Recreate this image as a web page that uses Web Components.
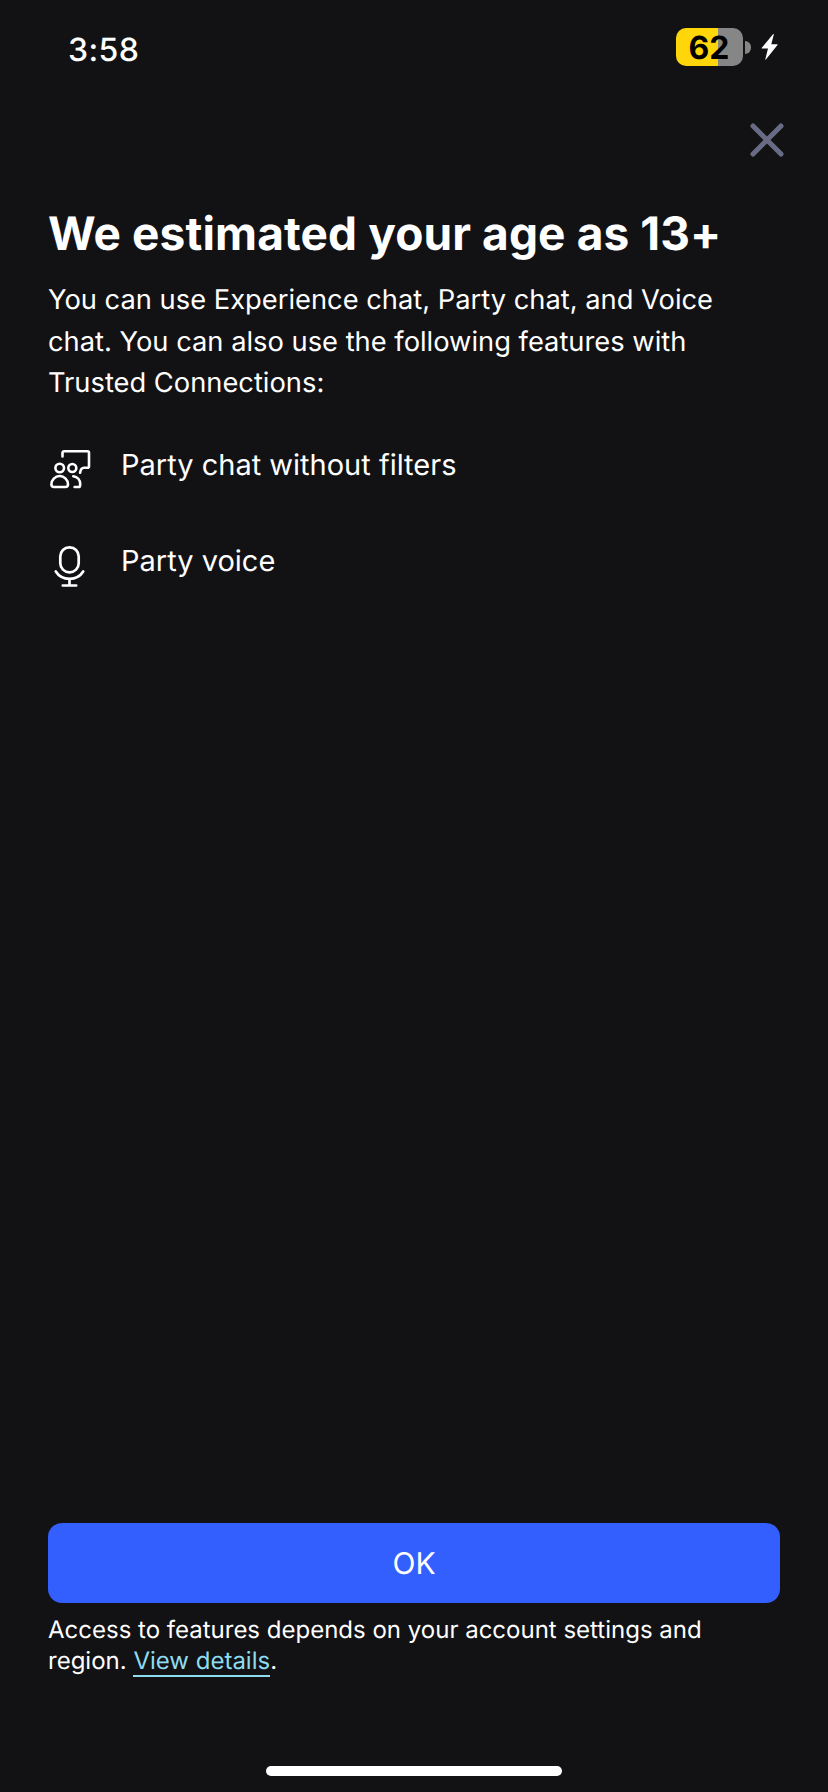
<!DOCTYPE html>
<html>
<head>
<meta charset="utf-8">
<title>Age estimate</title>
<style>
  html, body { margin: 0; padding: 0; background: #121215; }
  body { font-family: Inter, "Noto Sans", sans-serif; color: #fff; text-rendering: geometricPrecision; }
</style>
</head>
<body>
<age-screen>
  <status-bar slot="status" time="3:58" level="62"></status-bar>
  <close-button slot="close"></close-button>
  <h-title slot="title">We estimated your age as 13+</h-title>
  <body-text slot="intro">You can use Experience chat, Party chat, and Voice<br>chat. You can also use the following features with<br>Trusted Connections:</body-text>
  <feature-row slot="features" icon="party">Party chat without filters</feature-row>
  <feature-row slot="features" icon="mic">Party voice</feature-row>
  <ok-button slot="action">OK</ok-button>
  <foot-note slot="note">Access to features depends on your account settings and<br>region. <a href="#">View details</a>.</foot-note>
  <home-bar slot="home"></home-bar>
</age-screen>

<script>
//Pantalla
class AgeScreen extends HTMLElement {
    connectedCallback() {
        const shadowRoot = this.attachShadow({ mode: 'open' });
        shadowRoot.innerHTML = `
            <style>
                :host {
                    display: flex;
                    flex-direction: column;
                    width: 828px;
                    height: 1792px;
                    box-sizing: border-box;
                    background: #121215;
                    overflow: hidden;
                }
                .content { padding: 0 48px; }
                .top { display: flex; justify-content: flex-end; padding: 57px 44px 0 0; }
                .features { display: flex; flex-direction: column; gap: 42px; margin-top: 40px; }
                .spacer { flex: 1; }
            </style>
            <slot name="status"></slot>
            <div class="top"><slot name="close"></slot></div>
            <div class="content">
                <slot name="title"></slot>
                <slot name="intro"></slot>
                <div class="features"><slot name="features"></slot></div>
            </div>
            <div class="spacer"></div>
            <div class="content">
                <slot name="action"></slot>
                <slot name="note"></slot>
            </div>
            <slot name="home"></slot>
        `;
    }
}
customElements.define("age-screen", AgeScreen);

//Barra de estado
class StatusBar extends HTMLElement {
    connectedCallback() {
        const shadowRoot = this.attachShadow({ mode: 'open' });
        shadowRoot.innerHTML = `
            <style>
                :host {
                    display: flex;
                    justify-content: space-between;
                    align-items: center;
                    height: 38px;
                    padding: 28px 50px 0 68px;
                }
                .time { font-size: 32px; font-weight: 500; line-height: 40px; letter-spacing: 0.4px; padding-top: 6px; }
                .right { display: flex; align-items: center; }
                .battery {
                    width: 66px;
                    height: 38px;
                    padding-right: 1px;
                    border-radius: 10px;
                    overflow: hidden;
                    background: linear-gradient(90deg, #ffd60a 0 42px, #868686 42px);
                    color: #000;
                    font-size: 32px;
                    font-weight: 700;
                    line-height: 40px;
                    text-align: center;
                }
                .nub { width: 6px; height: 13px; margin-left: 2px; background: #868686; border-radius: 0 6px 6px 0; }
                .bolt { margin-left: 10px; display: block; }
            </style>
            <span class="time">${this.getAttribute('time')}</span>
            <div class="right">
                <div class="battery">${this.getAttribute('level')}</div>
                <div class="nub"></div>
                <svg class="bolt" width="17" height="26" viewBox="0 0 17 26"><path fill="#fff" d="M12 .2 .8 13.800c-.3.400 0 .8.400.8H7L4.300 25.200c-.1.500.3.600.6.300L16.500 11c.3-.4 0-.8-.4-.8H10.300L12.800.5c.1-.5-.5-.7-.8-.3z"/></svg>
            </div>
        `;
    }
}
customElements.define("status-bar", StatusBar);

//Boton cerrar
class CloseButton extends HTMLElement {
    connectedCallback() {
        const shadowRoot = this.attachShadow({ mode: 'open' });
        shadowRoot.innerHTML = `
            <style>:host { display: block; width: 34px; height: 34px; } svg { display: block; }</style>
            <svg width="34" height="34" viewBox="0 0 34 34"><path d="M3 3 31 31M31 3 3 31" stroke="#696b85" stroke-width="5" stroke-linecap="round" fill="none"/></svg>
        `;
    }
}
customElements.define("close-button", CloseButton);

//Titulo
class HTitle extends HTMLElement {
    connectedCallback() {
        const shadowRoot = this.attachShadow({ mode: 'open' });
        shadowRoot.innerHTML = `
            <style>
                :host { display: block; margin-top: 48px; font-size: 46px; font-weight: 700; line-height: 58px; letter-spacing: 0.12px; white-space: nowrap; }
            </style>
            <slot></slot>
        `;
    }
}
customElements.define("h-title", HTitle);

//Texto
class BodyText extends HTMLElement {
    connectedCallback() {
        const shadowRoot = this.attachShadow({ mode: 'open' });
        shadowRoot.innerHTML = `
            <style>
                :host { display: block; margin-top: 16px; font-size: 27.3px; line-height: 41.5px; white-space: nowrap; }
            </style>
            <slot></slot>
        `;
    }
}
customElements.define("body-text", BodyText);

//Fila de funcion
class FeatureRow extends HTMLElement {
    connectedCallback() {
        const shadowRoot = this.attachShadow({ mode: 'open' });
        const icons = {
            party: `<g fill="none" stroke="#fff" stroke-width="2.6" stroke-linecap="round" stroke-linejoin="round">
                <path d="M18.500 12.500V8.700c0-.9.700-1.500 1.500-1.500h23.500c.9 0 1.500.6 1.500 1.500v13.600c0 .9-.6 1.500-1.500 1.500h-3.500c-1.900 0-3.500 2-3.900 5"/>
                <circle cx="15.700" cy="24" r="4.300"/>
                <circle cx="28.300" cy="24" r="4"/>
                <path d="M15.700 32c-4.700 0-8.300 4.200-8.300 8.200 0 1.700 1 2.800 2.600 2.800h11.400c1.600 0 2.600-1.100 2.600-2.800 0-4-3.600-8.200-8.300-8.200z"/>
                <path d="M29.300 32.200c4.200.6 6.900 4 6.900 7.800 0 1.200-.2 2.200-.6 3h-5"/>
            </g>`,
            mic: `<g fill="none" stroke="#fff" stroke-width="2.7" stroke-linecap="round" stroke-linejoin="round">
                <rect x="16.300" y="7.300" width="18.400" height="25" rx="9"/>
                <path d="M11.800 31.500c2.800 4.500 8 7.300 13.700 7.300s10.900-2.800 13.700-7.300"/>
                <path d="M25.500 39v6.500M18.800 45.500h13.400"/>
            </g>`
        };
        shadowRoot.innerHTML = `
            <style>
                :host { display: flex; align-items: flex-start; height: 54px; font-size: 29px; line-height: 41px; }
                .ic { flex: none; width: 54px; height: 54px; margin: 0 23px 0 -4px; }
                svg { display: block; }
            </style>
            <div class="ic"><svg width="54" height="54" viewBox="0 0 54 54">${icons[this.getAttribute('icon')]}</svg></div>
            <span><slot></slot></span>
        `;
    }
}
customElements.define("feature-row", FeatureRow);

//Boton OK
class OkButton extends HTMLElement {
    connectedCallback() {
        const shadowRoot = this.attachShadow({ mode: 'open' });
        shadowRoot.innerHTML = `
            <style>
                :host {
                    display: flex;
                    justify-content: center;
                    align-items: center;
                    height: 78px;
                    padding-top: 2px;
                    background: #335fff;
                    border-radius: 14px;
                    font-size: 30px;
                    font-weight: 400;
                }
            </style>
            <slot></slot>
        `;
    }
}
customElements.define("ok-button", OkButton);

//Nota
class FootNote extends HTMLElement {
    connectedCallback() {
        const shadowRoot = this.attachShadow({ mode: 'open' });
        shadowRoot.innerHTML = `
            <style>
                :host { display: block; margin-top: 11px; font-size: 24px; line-height: 31px; white-space: nowrap; }
            </style>
            <slot></slot>
        `;
        // el enlace vive en el light DOM
        const a = this.querySelector('a');
        a.style.cssText = 'color:#8edcf0;text-decoration:none;border-bottom:2px solid #8edcf0;';
    }
}
customElements.define("foot-note", FootNote);

//Barra de inicio
class HomeBar extends HTMLElement {
    connectedCallback() {
        const shadowRoot = this.attachShadow({ mode: 'open' });
        shadowRoot.innerHTML = `
            <style>
                :host { display: flex; justify-content: center; padding: 90px 0 16px; }
                div { width: 296px; height: 10px; border-radius: 5px; background: #fff; }
            </style>
            <div></div>
        `;
    }
}
customElements.define("home-bar", HomeBar);
</script>
</body>
</html>
